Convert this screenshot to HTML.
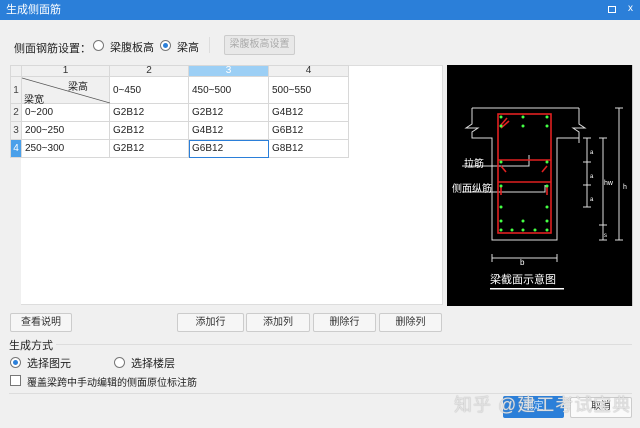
<!DOCTYPE html>
<html><head><meta charset="utf-8"><style>
*{margin:0;padding:0;box-sizing:border-box}
body{width:640px;height:428px;background:#f0f0f0;font-family:"Liberation Sans","Noto Sans CJK SC",sans-serif;font-size:11px;color:#222;position:relative;overflow:hidden}
.abs{position:absolute}
.title{left:0;top:0;width:640px;height:20px;background:#2b7fd9;color:#fff;font-size:11px;line-height:20px;padding-left:6px}
.btn{position:absolute;background:#f6f6f6;border:1px solid #ccc;border-radius:2px;text-align:center;font-size:10px;line-height:18px;color:#333}
.radio{position:absolute;width:11px;height:11px;border:1px solid #777;border-radius:50%;background:#fff}
.radio.on::after{content:"";position:absolute;left:2px;top:2px;width:5px;height:5px;border-radius:50%;background:#2b7fd9}
table{border-collapse:collapse;position:absolute;left:10px;top:65px;font-size:10px}
td{border:1px solid #d8d8d8;background:#fff;padding-left:3px;height:18px}
.h{background:#f0f0f0;text-align:center;padding:0;height:11px;font-size:10px;line-height:10px;color:#333}
.rh{background:#f0f0f0;text-align:center;padding:0;width:11px;color:#444}
</style></head><body>
<div class="abs title">生成侧面筋</div>
<div class="abs" style="right:24px;top:6px;width:8px;height:7px;border:1px solid #fff"></div>
<div class="abs" style="right:7px;top:3px;color:#fff;font-size:10px">x</div>
<div class="abs" style="left:14px;top:40px">侧面钢筋设置：</div>
<div class="radio" style="left:93px;top:40px"></div>
<div class="abs" style="left:110px;top:39px">梁腹板高</div>
<div class="radio on" style="left:160px;top:40px"></div>
<div class="abs" style="left:177px;top:39px">梁高</div>
<div class="abs" style="left:209px;top:37px;width:1px;height:16px;background:#ddd"></div>
<div class="btn" style="left:224px;top:35px;width:71px;height:20px;color:#aaa;background:#e8e8e8">梁腹板高设置</div>
<div class="abs" style="left:10px;top:65px;width:433px;height:240px;background:#fff;border:1px solid #ddd"></div>
<div class="abs" style="left:10px;top:65px;width:11px;height:240px;background:#f0f0f0"></div>
<table>
<tr><td class="h" style="width:11px"></td><td class="h" style="width:88px">1</td><td class="h" style="width:79px">2</td><td class="h" style="width:80px;background:#9ccff5;color:#fff">3</td><td class="h" style="width:80px">4</td></tr>
<tr><td class="rh" style="height:27px">1</td><td style="background:#f0f0f0;position:relative;padding:0"><svg width="88" height="27" style="position:absolute;left:0;top:0"><line x1="0" y1="1" x2="88" y2="26" stroke="#555" stroke-width="0.8"/></svg><span style="position:absolute;left:46px;top:1px">梁高</span><span style="position:absolute;left:2px;top:14px">梁宽</span></td><td>0~450</td><td>450~500</td><td>500~550</td></tr>
<tr><td class="rh">2</td><td>0~200</td><td>G2B12</td><td>G2B12</td><td>G4B12</td></tr>
<tr><td class="rh">3</td><td>200~250</td><td>G2B12</td><td>G4B12</td><td>G6B12</td></tr>
<tr><td class="rh" style="background:#4aa0ea;color:#fff">4</td><td>250~300</td><td>G2B12</td><td style="outline:1px solid #2b7fd9;outline-offset:-1px">G6B12</td><td>G8B12</td></tr>
</table>
<svg class="abs" style="left:447px;top:65px" width="186" height="241">
<rect width="186" height="241" fill="#000"/>
<g transform="translate(-447,-65)" fill="none" stroke="#ddd" stroke-width="1">
<path d="M472 108H579M472 108V124L466 128H478L472 132V138H492V240H557V138H579V132L573 128H585L579 124V108M579 138V143"/>
<path d="M587 138V207M583 138H591M583 162H591M583 185H591M583 207H591M603 138V225M599 138H607M599 225H607M603 225V240M599 240H607M619 108V240M615 108H623M615 240H623M492 258H557M492 254V262M557 254V262"/>
<path d="M462 166H529V155M462 192H545V185"/>
</g>
<g transform="translate(-447,-65)" fill="none" stroke="#e02020" stroke-width="1.6">
<rect x="498" y="114" width="53" height="119"/>
<path d="M498 160H551M498 182H551M501 125L507 118M501 128L509 121M501 166L506 172M547 166L542 172M501 186V195M547 186V195"/>
</g>
<g transform="translate(-447,-65)" fill="#4f4">
<circle cx="501" cy="117" r="1.5"/><circle cx="523" cy="117" r="1.5"/><circle cx="547" cy="117" r="1.5"/>
<circle cx="501" cy="126" r="1.5"/><circle cx="523" cy="126" r="1.5"/><circle cx="547" cy="126" r="1.5"/>
<circle cx="501" cy="162" r="1.5"/><circle cx="547" cy="162" r="1.5"/>
<circle cx="501" cy="186" r="1.5"/><circle cx="547" cy="186" r="1.5"/>
<circle cx="501" cy="207" r="1.5"/><circle cx="547" cy="207" r="1.5"/>
<circle cx="501" cy="221" r="1.5"/><circle cx="523" cy="221" r="1.5"/><circle cx="547" cy="221" r="1.5"/>
<circle cx="501" cy="230" r="1.5"/><circle cx="512" cy="230" r="1.5"/><circle cx="523" cy="230" r="1.5"/><circle cx="535" cy="230" r="1.5"/><circle cx="547" cy="230" r="1.5"/>
</g>
<g fill="#fff" font-family="Liberation Sans,Noto Sans CJK SC,sans-serif">
<text x="17" y="102" font-size="10">拉筋</text>
<text x="5" y="127" font-size="10">侧面纵筋</text>
<text x="73" y="200" font-size="8">b</text>
<text x="143" y="89" font-size="6">a</text><text x="143" y="113" font-size="6">a</text><text x="143" y="136" font-size="6">a</text>
<text x="157" y="120" font-size="7">hw</text><text x="176" y="124" font-size="7">h</text><text x="157" y="172" font-size="6">s</text>
<text x="43" y="218" font-size="11">梁截面示意图</text>
</g>
<rect x="43" y="223" width="74" height="1.5" fill="#fff"/>
</svg>
<div class="abs" style="left:632px;top:65px;width:1px;height:241px;background:#ccc"></div>
<div class="btn" style="left:10px;top:313px;width:62px;height:19px">查看说明</div>
<div class="btn" style="left:177px;top:313px;width:67px;height:19px">添加行</div>
<div class="btn" style="left:246px;top:313px;width:64px;height:19px">添加列</div>
<div class="btn" style="left:313px;top:313px;width:63px;height:19px">删除行</div>
<div class="btn" style="left:379px;top:313px;width:63px;height:19px">删除列</div>
<div class="abs" style="left:9px;top:337px;font-size:11px">生成方式</div>
<div class="abs" style="left:56px;top:344px;width:576px;height:1px;background:#ddd"></div>
<div class="radio on" style="left:10px;top:357px"></div>
<div class="abs" style="left:27px;top:355px">选择图元</div>
<div class="radio" style="left:114px;top:357px"></div>
<div class="abs" style="left:131px;top:355px">选择楼层</div>
<div class="abs" style="left:10px;top:375px;width:11px;height:11px;border:1px solid #777;background:#fff"></div>
<div class="abs" style="left:27px;top:374px;font-size:10px">覆盖梁跨中手动编辑的侧面原位标注筋</div>
<div class="abs" style="left:9px;top:393px;width:623px;height:1px;background:#ddd"></div>
<div class="btn" style="left:503px;top:396px;width:61px;height:22px;background:#2b7fd9;border-color:#2b7fd9;color:#cfe4fa;line-height:20px">确定</div>
<div class="btn" style="left:570px;top:397px;width:62px;height:21px;background:#fafafa">取消</div>
<div class="abs" style="left:454px;top:391px;font-size:18px;color:rgba(235,235,235,0.85);letter-spacing:1px;text-shadow:0 0 1px #999">知乎 @建工考试宝典</div>
</body></html>
